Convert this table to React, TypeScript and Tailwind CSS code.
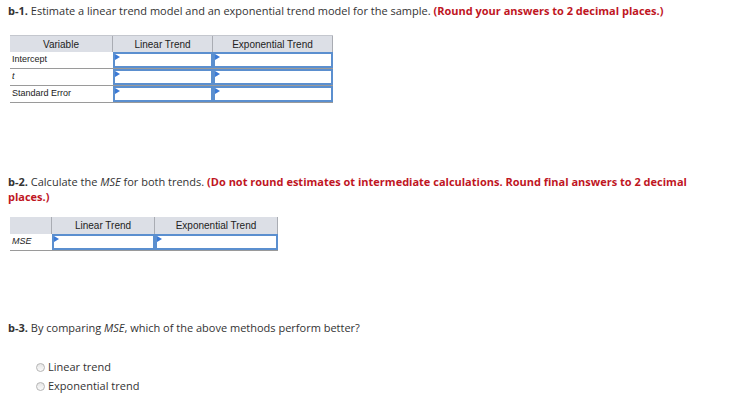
import React from "react";

const body = { fontFamily: '"Open Sans", "Lato", sans-serif' };
const tbl = { fontFamily: '"Liberation Sans", Arial, sans-serif' };

function Input() {
  return (
    <div className="relative h-full w-full border-2 border-[#5b8fcf] bg-white">
      <span className="absolute left-0 top-0 h-0 w-0 border-y-[3px] border-l-[5px] border-y-transparent border-l-[#3b7ad6]" />
    </div>
  );
}

function Radio({ label }: { label: string }) {
  return (
    <label className="flex items-center gap-[3px] h-[19px]">
      <span className="h-[9px] w-[9px] rounded-full border border-[#b5b5b5] bg-gradient-to-b from-[#e6e6e6] to-[#fafafa]" />
      <span className="text-[11px] text-[#333]">{label}</span>
    </label>
  );
}

export default function App() {
  const rows = ["Intercept", "t", "Standard Error"];
  return (
    <div className="w-[753px] h-[410px] bg-white text-[#333] relative" style={body}>
      <div className="px-[8px] pt-[3px]">
        <p className="text-[11px] leading-[15px]">
          <b>b-1.</b> Estimate a linear trend model and an exponential trend model for the sample.{" "}
          <b className="text-[#c0161f]">(Round your answers to 2 decimal places.)</b>
        </p>

        <div className="mt-[17px] ml-[2px] w-[323px] text-[10px] text-[#222]" style={tbl}>
          <div className="grid grid-cols-[103px_100px_120px] h-[17px] bg-[#dcdfe6] border-t border-[#c4c7ce]">
            <div className="flex items-center justify-center border-r border-[#a9acb3]">Variable</div>
            <div className="flex items-center justify-center border-r border-[#a9acb3]">Linear Trend</div>
            <div className="flex items-center justify-center border-r border-[#a9acb3]">Exponential Trend</div>
          </div>
          {rows.map((r) => (
            <div key={r} className="grid grid-cols-[103px_100px_120px] h-[17px] border-b border-[#9a9a9a]">
              <div className={`flex items-center pl-[2px] text-[9px] ${r === "t" ? "italic" : ""}`}>{r}</div>
              <Input />
              <Input />
            </div>
          ))}
        </div>

        <p className="mt-[71px] text-[11px] leading-[15px] w-[690px]">
          <b>b-2.</b> Calculate the <i>MSE</i> for both trends.{" "}
          <b className="text-[#c0161f]">
            (Do not round estimates ot intermediate calculations. Round final answers to 2 decimal
          </b>{" "}
          <b className="text-[#c0161f]">places.)</b>
        </p>

        <div className="mt-[13px] ml-[2px] w-[268px] text-[10px] text-[#222]" style={tbl}>
          <div className="grid grid-cols-[42px_103px_123px] h-[17px] bg-[#dcdfe6]">
            <div className="border-r border-[#a9acb3]" />
            <div className="flex items-center justify-center border-r border-[#a9acb3]">Linear Trend</div>
            <div className="flex items-center justify-center border-r border-[#a9acb3]">Exponential Trend</div>
          </div>
          <div className="grid grid-cols-[42px_103px_123px] h-[17px] border-b border-[#9a9a9a]">
            <div className="flex items-center pl-[2px] italic text-[9px]">MSE</div>
            <Input />
            <Input />
          </div>
        </div>

        <p className="mt-[69px] text-[11px] leading-[15px]">
          <b>b-3.</b> By comparing <i>MSE</i>, which of the above methods perform better?
        </p>

        <div className="mt-[23px] ml-[28px]">
          <Radio label="Linear trend" />
          <Radio label="Exponential trend" />
        </div>
      </div>
    </div>
  );
}
